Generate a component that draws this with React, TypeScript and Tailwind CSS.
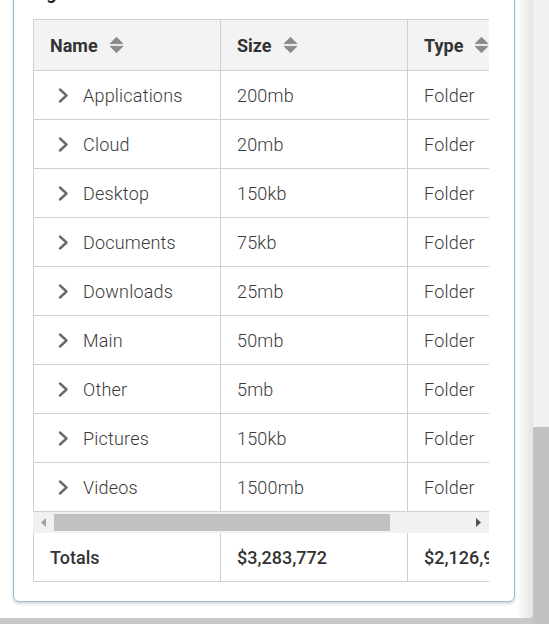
import React from "react";

const rows: [string, string, string][] = [
  ["Applications", "200mb", "Folder"],
  ["Cloud", "20mb", "Folder"],
  ["Desktop", "150kb", "Folder"],
  ["Documents", "75kb", "Folder"],
  ["Downloads", "25mb", "Folder"],
  ["Main", "50mb", "Folder"],
  ["Other", "5mb", "Folder"],
  ["Pictures", "150kb", "Folder"],
  ["Videos", "1500mb", "Folder"],
];

function SortIcon() {
  return (
    <svg width="15" height="18" viewBox="0 0 15 18" className="shrink-0">
      <path d="M1.2 7.6 L7.5 1.3 L13.8 7.6 Z" fill="#8a8a8a" stroke="#8a8a8a" strokeWidth="1" strokeLinejoin="round" />
      <path d="M1.2 10.4 L7.5 16.7 L13.8 10.4 Z" fill="#8a8a8a" stroke="#8a8a8a" strokeWidth="1" strokeLinejoin="round" />
    </svg>
  );
}

function Chevron() {
  return (
    <svg width="11" height="15" viewBox="0 0 11 15" className="shrink-0">
      <polyline points="2,1.5 8.5,7.5 2,13.5" fill="none" stroke="#6a6a6a" strokeWidth="2.4" strokeLinecap="round" strokeLinejoin="round" />
    </svg>
  );
}

export default function App() {
  return (
    <div
      className="w-[549px] h-[624px] overflow-hidden flex bg-[#c8c8c8]"
      style={{ fontFamily: "Roboto, 'Liberation Sans', sans-serif" }}
    >
      <div className="w-[533px] h-[618px] shrink-0 rounded-br-[4px] overflow-hidden bg-[linear-gradient(to_right,#ffffff_516px,#e4e4e4_533px)]">
        <div className="ml-[13px] mt-[-30px] w-[502px] border border-[#9bbbd0] rounded-[6px] bg-white shadow-[0_2px_3px_rgba(80,110,130,0.25)] pl-[19px] pb-[19px]">
          <div className="h-[48px] pt-[13px] ml-[-8px] text-[18px] leading-[18px] font-bold text-[#222]">
            Pagination
          </div>
          <div className="w-[456px] overflow-hidden text-[18px] text-[#3a3a3a] font-light tracking-[0.2px]">
            <div className="border-l border-t border-[#cfcfcf] w-[700px]">
              <div className="flex bg-[#f3f3f3] h-[51px]">
                {["Name", "Size", "Type"].map((h) => (
                  <div
                    key={h}
                    className="w-[187px] shrink-0 border-r border-b border-[#cfcfcf] flex items-center pl-[16px] font-bold tracking-normal text-[#333]"
                  >
                    <span>{h}</span>
                    <span className="ml-[11px] flex items-center">
                      <SortIcon />
                    </span>
                  </div>
                ))}
              </div>
              {rows.map(([name, size, type]) => (
                <div key={name} className="flex h-[49px]">
                  <div className="w-[187px] shrink-0 border-r border-b border-[#cfcfcf] flex items-center pl-[24px]">
                    <Chevron />
                    <span className="ml-[14px]">{name}</span>
                  </div>
                  <div className="w-[187px] shrink-0 border-r border-b border-[#cfcfcf] flex items-center pl-[16px]">
                    {size}
                  </div>
                  <div className="w-[187px] shrink-0 border-r border-b border-[#cfcfcf] flex items-center pl-[16px]">
                    {type}
                  </div>
                </div>
              ))}
            </div>
            <div className="h-[21px] bg-[#f1f1f1] flex items-center">
              <div className="w-[21px] h-full flex items-center justify-center">
                <svg width="5" height="9" viewBox="0 0 5 9">
                  <path d="M5 0 L0 4.5 L5 9 Z" fill="#a3a3a3" />
                </svg>
              </div>
              <div className="w-[336px] h-[17px] bg-[#c1c1c1]" />
              <div className="flex-1" />
              <div className="w-[22px] h-full flex items-center justify-center">
                <svg width="5" height="9" viewBox="0 0 5 9">
                  <path d="M0 0 L5 4.5 L0 9 Z" fill="#505050" />
                </svg>
              </div>
            </div>
            <div className="border-l border-[#cfcfcf] w-[700px] flex h-[49px] font-medium tracking-normal text-[#333]">
              <div className="w-[187px] shrink-0 border-r border-b border-[#cfcfcf] flex items-center pl-[16px]">
                Totals
              </div>
              <div className="w-[187px] shrink-0 border-r border-b border-[#cfcfcf] flex items-center pl-[16px]">
                $3,283,772
              </div>
              <div className="w-[187px] shrink-0 border-r border-b border-[#cfcfcf] flex items-center pl-[16px]">
                $2,126,950
              </div>
            </div>
          </div>
        </div>
      </div>
      <div className="w-[16px] h-full flex flex-col shrink-0">
        <div className="h-[427px] bg-[#f1f1f1]" />
        <div className="flex-1 bg-[#c1c1c1]" />
      </div>
    </div>
  );
}
